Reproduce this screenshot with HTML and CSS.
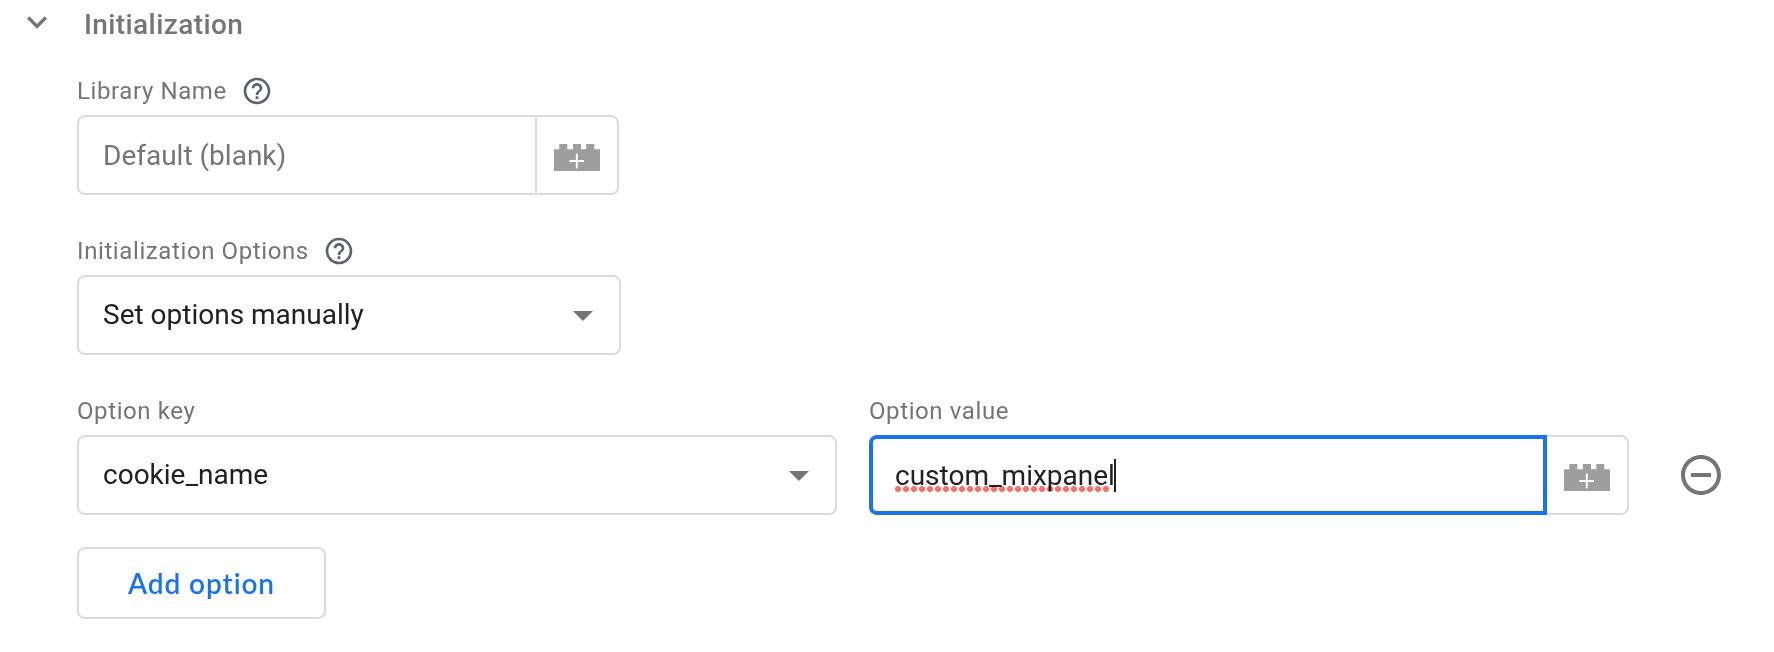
FILE: index.html
```html
<!DOCTYPE html>
<html lang="en">
  <head>
    <meta charset="UTF-8" />
    <meta name="viewport" content="width=device-width, initial-scale=1.0" />
    <title>Initialization</title>
    <link rel="stylesheet" href="styles.css" />
  </head>
  <body>
    <!-- shared icons -->
    <svg class="sprite" width="0" height="0">
      <symbol id="help" viewBox="0 0 24 24">
        <path d="M11 18h2v-2h-2v2zm1-16C6.48 2 2 6.48 2 12s4.48 10 10 10 10-4.48 10-10S17.52 2 12 2zm0 18c-4.41 0-8-3.59-8-8s3.59-8 8-8 8 3.59 8 8-3.59 8-8 8zm0-14c-2.21 0-4 1.79-4 4h2c0-1.1.9-2 2-2s2 .9 2 2c0 2-3 1.75-3 5h2c0-2.25 3-2.5 3-5 0-2.21-1.79-4-4-4z" />
      </symbol>
      <symbol id="brick" viewBox="0 0 46 27">
        <path d="M0 5.3h5.3V0h8v5.3h5.7V0h8v5.3h5.3V0h8v5.3H46V27H0z" />
        <path class="plus" d="M15.3 17H30M22.8 9.4v15" />
      </symbol>
    </svg>

    <header class="section-header">
      <svg class="chevron" viewBox="0 0 24 24">
        <path d="M16.59 8.59L12 13.17 7.41 8.59 6 10l6 6 6-6z" />
      </svg>
      <h2>Initialization</h2>
    </header>

    <main>
      <div class="field">
        <div class="label">
          <span>Library Name</span>
          <svg class="help"><use href="#help" /></svg>
        </div>
        <div class="input-group">
          <input class="text-input" type="text" placeholder="Default (blank)" />
          <button class="brick-button" type="button">
            <svg class="brick"><use href="#brick" /></svg>
          </button>
        </div>
      </div>

      <div class="field">
        <div class="label">
          <span>Initialization Options</span>
          <svg class="help"><use href="#help" /></svg>
        </div>
        <div class="select">
          <span>Set options manually</span>
          <i class="arrow"></i>
        </div>
      </div>

      <div class="option-row">
        <div class="field">
          <div class="label"><span>Option key</span></div>
          <div class="select select-wide">
            <span>cookie_name</span>
            <i class="arrow"></i>
          </div>
        </div>
        <div class="field">
          <div class="label"><span>Option value</span></div>
          <div class="input-group">
            <div class="text-input focused">
              <span class="misspelled">custom_mixpanel</span><i class="caret"></i>
            </div>
            <button class="brick-button" type="button">
              <svg class="brick"><use href="#brick" /></svg>
            </button>
          </div>
        </div>
        <button class="remove" type="button">
          <svg viewBox="0 0 24 24">
            <path d="M7 11v2h10v-2H7zm5-9C6.48 2 2 6.48 2 12s4.48 10 10 10 10-4.48 10-10S17.52 2 12 2zm0 18c-4.41 0-8-3.59-8-8s3.59-8 8-8 8 3.59 8 8-3.59 8-8 8z" />
          </svg>
        </button>
      </div>

      <button class="add" type="button">Add option</button>
    </main>
  </body>
</html>
```
FILE: styles.css
```css
* {
  box-sizing: border-box;
}
body {
  margin: 0;
  background-color: #fff;
  color: #212121;
  font-family: Roboto, sans-serif;
  font-size: 28px;
}
button {
  padding: 0;
  border: none;
  background: none;
  font: inherit;
  cursor: pointer;
}
svg {
  display: block;
  flex: none;
}
.sprite {
  position: absolute;
}
.section-header {
  display: flex;
  height: 48px;
  padding-left: 17px;
  color: #757575;
}
.chevron {
  width: 40px;
  height: 40px;
  margin-top: 2px;
  fill: #757575;
}
h2 {
  margin: 0 0 0 27px;
  font-size: 28px;
  font-weight: 500;
  line-height: 50px;
  letter-spacing: 0.4px;
}
main {
  padding: 23px 0 0 77px;
}
.field {
  margin-bottom: 36px;
}
.label {
  display: flex;
  align-items: center;
  height: 40px;
  margin-bottom: 4px;
  color: #757575;
  font-size: 24px;
  letter-spacing: 0.6px;
}
.help {
  width: 32px;
  height: 32px;
  margin-left: 14px;
  fill: #5f6368;
}
.input-group {
  display: flex;
  height: 80px;
}
.text-input {
  width: 460px;
  padding: 0 24px;
  border: 2px solid #dadce0;
  border-radius: 8px 0 0 8px;
  outline: none;
  background: #fff;
  color: #212121;
  font: inherit;
}
.text-input::placeholder {
  color: #757575;
}
.focused {
  display: flex;
  align-items: center;
  width: 678px;
  padding: 0 22px;
  border: 4px solid #1a73e8;
}
.misspelled {
  position: relative;
}
/* spell checker dots */
.misspelled::after {
  content: "";
  position: absolute;
  left: 0;
  top: 27px;
  width: 215px;
  height: 8px;
  background: radial-gradient(circle at 3px 3px, #ff6d63 2.7px, transparent 3.3px);
  background-size: 8px 8px;
  mix-blend-mode: multiply;
}
.caret {
  width: 2px;
  height: 33px;
  margin-left: -1px;
  background-color: #212121;
}
.brick-button {
  width: 82px;
  padding: 0 0 0 17px;
  border: 2px solid #dadce0;
  border-left: none;
  border-radius: 0 8px 8px 0;
}
.brick {
  width: 46px;
  height: 27px;
  margin-top: 5px;
  fill: #9e9e9e;
}
.plus {
  fill: none;
  stroke: #fff;
  stroke-width: 1.9;
}
.select {
  display: flex;
  align-items: center;
  justify-content: space-between;
  width: 544px;
  height: 80px;
  padding: 0 26px 2px 24px;
  border: 2px solid #dadce0;
  border-radius: 8px;
}
.select-wide {
  width: 760px;
}
.arrow {
  margin-top: 4px;
  border: 10px solid transparent;
  border-top-color: #757575;
  border-bottom: none;
}
.option-row {
  display: flex;
  gap: 32px;
}
.option-row .field {
  margin-bottom: 32px;
}
.remove {
  width: 48px;
  height: 48px;
  margin: 60px 0 0 16px;
}
.remove svg {
  width: 48px;
  height: 48px;
  fill: #757575;
}
.add {
  width: 249px;
  height: 72px;
  border: 2px solid #dadce0;
  border-radius: 8px;
  color: #1a73e8;
  font-family: Lato, sans-serif;
  font-weight: 600;
  letter-spacing: 0.9px;
}
```
